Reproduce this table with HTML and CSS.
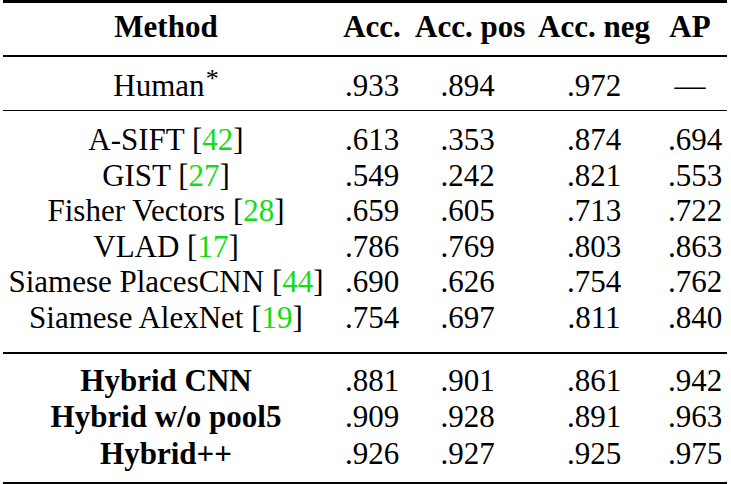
FILE: index.html
```html
<!DOCTYPE html>
<html>
<head>
<meta charset="utf-8">
<link rel="stylesheet" href="styles.css">
</head>
<body>
<div class="table">
  <div class="rule thick"></div>
  <div class="group head">
    <div class="row bold">
      <div>Method</div><div>Acc.</div><div>Acc. pos</div><div>Acc. neg</div><div class="ap">AP</div>
    </div>
  </div>
  <div class="rule"></div>
  <div class="group human">
    <div class="row">
      <div>Human<sup class="star">*</sup></div><div>.933</div><div>.894</div><div>.972</div><div class="ap">—</div>
    </div>
  </div>
  <div class="rule"></div>
  <div class="group base">
    <div class="row"><div>A-SIFT [<span class="cite">42</span>]</div><div>.613</div><div>.353</div><div>.874</div><div class="ap">.694</div></div>
    <div class="row"><div>GIST [<span class="cite">27</span>]</div><div>.549</div><div>.242</div><div>.821</div><div class="ap">.553</div></div>
    <div class="row"><div>Fisher Vectors [<span class="cite">28</span>]</div><div>.659</div><div>.605</div><div>.713</div><div class="ap">.722</div></div>
    <div class="row"><div>VLAD [<span class="cite">17</span>]</div><div>.786</div><div>.769</div><div>.803</div><div class="ap">.863</div></div>
    <div class="row"><div>Siamese PlacesCNN [<span class="cite">44</span>]</div><div>.690</div><div>.626</div><div>.754</div><div class="ap">.762</div></div>
    <div class="row"><div>Siamese AlexNet [<span class="cite">19</span>]</div><div>.754</div><div>.697</div><div>.811</div><div class="ap">.840</div></div>
  </div>
  <div class="rule"></div>
  <div class="group ours">
    <div class="row"><div class="bold">Hybrid CNN</div><div>.881</div><div>.901</div><div>.861</div><div class="ap">.942</div></div>
    <div class="row"><div class="bold">Hybrid w/o pool5</div><div>.909</div><div>.928</div><div>.891</div><div class="ap">.963</div></div>
    <div class="row"><div class="bold">Hybrid++</div><div>.926</div><div>.927</div><div>.925</div><div class="ap">.975</div></div>
  </div>
  <div class="rule thick"></div>
</div>
</body>
</html>
```
FILE: styles.css
```css
html, body {
  margin: 0;
  padding: 0;
  background: #ffffff;
}
body {
  font-family: "Liberation Serif", "Times New Roman", serif;
  font-size: 31px;
  color: #000000;
}
.table {
  width: 724px;
  margin-left: 3px;
}
.rule {
  height: 1.5px;
  background: #000000;
}
.rule.thick {
  height: 3px;
}
.row {
  display: grid;
  grid-template-columns: 326px 86px 105px 148px 59px;
  text-align: center;
  line-height: 36px;
  white-space: nowrap;
}
.row > div {
  white-space: nowrap;
}
.row > .ap {
  padding-right: 15px;
}
.bold {
  font-weight: bold;
}
.group.head {
  padding-top: 6px;
  padding-bottom: 10px;
}
.group.human {
  padding-top: 11px;
  padding-bottom: 6px;
}
.group.base {
  padding-top: 11px;
  padding-bottom: 17px;
}
.group.base .row {
  line-height: 35.5px;
}
.group.ours {
  padding-top: 9px;
  padding-bottom: 10px;
}
.group.ours .row {
  line-height: 36.5px;
}
.cite {
  color: #14dc14;
}
.star {
  font-size: 26px;
  line-height: 0;
  vertical-align: 0;
  position: relative;
  top: -9px;
  margin-left: 1px;
}
```
